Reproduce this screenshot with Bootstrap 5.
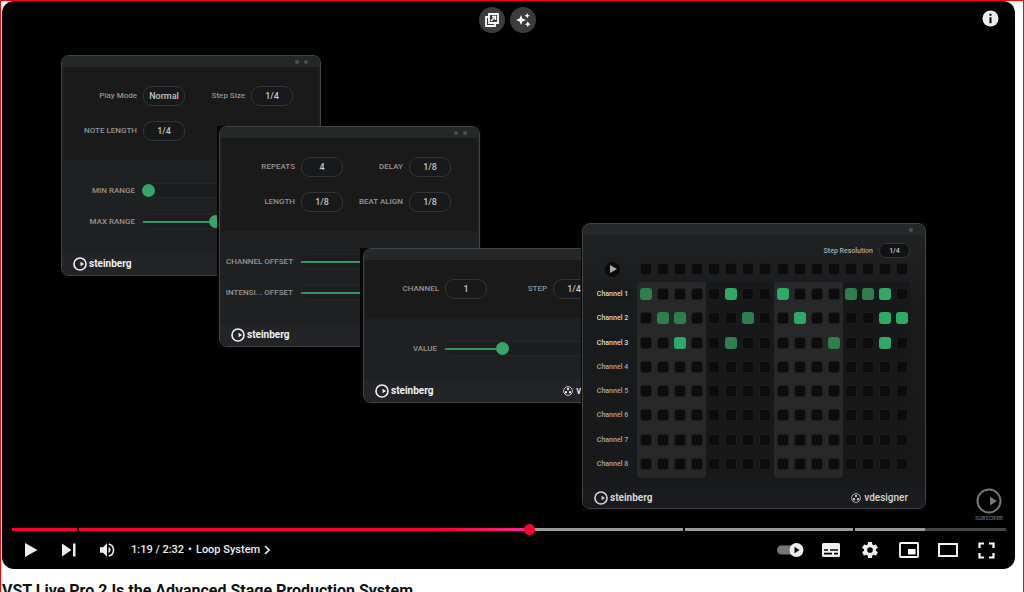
<!DOCTYPE html>
<html lang="en">
<head>
<meta charset="utf-8">
<meta name="viewport" content="width=device-width, initial-scale=1">
<title>VST Live Pro 2</title>
<link href="https://cdn.jsdelivr.net/npm/bootstrap@5.3.0/dist/css/bootstrap.min.css" rel="stylesheet">
<style>
body{font-family:Roboto,"Liberation Sans",sans-serif;background:#fff}
button{background:none;border:0;padding:0;color:inherit}
.frame{height:100vh;border:1px solid #f00;border-bottom:0;padding:0 8px 0 1px}
.player{aspect-ratio:1013/568;background:#000;border-radius:12px;color:#eee}
.round{width:26px;height:26px;border-radius:50%;background:#3c3c3c}
.top-bar{padding:6px 2px 0 0;gap:5px}
.info-btn{right:16px;top:9px}
.watermark{right:12px;bottom:48px;color:#777;font:500 5px/6px Inter,sans-serif;gap:1px}

/* plug-in windows */
.shot{position:absolute;background:#060606;font-size:8px;font-weight:500;line-height:12px;color:#949494}
.shot-1{left:59px;top:54px;width:260px}
.shot-2{left:215px;top:125px;width:264px;padding:0 1px 1px 2px}
.shot-3{left:358px;top:247px;width:278px;padding:0 0 1px 3px}
.shot-4{left:579px;top:222px;width:346px;padding:0 1px 2px 1px}
.panel{border:1px solid #414344;border-radius:8px;overflow:hidden;background:#1f2022}
.bar{height:11px;background:#242828;padding-right:12px;gap:5px}
.bar i{width:4px;height:4px;border-radius:50%;background:#4c5050}
.fields{background:#1a1a1a;padding:19px 0;margin:0 2px;display:grid;grid-template-columns:73px 42px 54px 42px;gap:15px 6px;align-items:center}
.fields label{text-align:right;white-space:nowrap}
.pill{width:42px;height:20px;border:1px solid #333435;border-radius:9px;background:#18191a;color:#c4c4c4;text-align:center;font-size:9px;font-weight:500;line-height:16px;padding:0;appearance:none}
.sliders{background:#1f2022;padding:23px 0;gap:16px}
.slide{height:15px;gap:7px}
.slide label{width:73px;text-align:right;white-space:nowrap}
.slide input{appearance:none;width:150px;height:15px;margin:0;border-radius:7px;box-shadow:inset 0 0 0 1px #242627;background:linear-gradient(#329563,#329563) 0 50%/var(--v) 2px no-repeat,#1b1d1e}
.slide input::-webkit-slider-thumb{appearance:none;width:13px;height:13px;margin:0;border-radius:50%;background:#38a46c}
.foot{height:23px;background:#222428;padding:0 17px 0 11px;color:#f2f2f2}
.brand{font-size:10px;font-weight:700;gap:2px}
.brand-v{font-size:10px;font-weight:500;gap:3px}

.seq{background:linear-gradient(#202223,#1a1b1d 30%,#17181a)}
.seq .foot{height:21px;background:#1a1b1e;color:#d5d5d5;margin-top:9px}
.seq-head{padding:8px 15px 0 0;gap:6px;font-size:7px;color:#aaa}
.seq-head .pill{width:31px;height:15px;font-size:7px;line-height:11px;border-radius:7px;background:#111213}
.seq-grid{display:grid;grid-template-columns:43px 1fr;column-gap:3px;padding:0 14px 0 8px}
.clock{height:22px;display:grid;grid-template-columns:repeat(16,1fr);place-items:center}
.play-dot{width:15px;height:15px;border-radius:50%;background:#0b0b0b;color:#aaa}
.names{display:grid;grid-template-rows:repeat(8,1fr);height:196px;margin-top:2px;padding-bottom:2px;align-items:center;text-align:center;font-size:7px;color:#a8a8a8}
.names span{background:#191a1b;border-radius:4px;margin:0 2px}
.names span:nth-child(-n+3){color:#d8d8d8}
.beats{display:grid;grid-template-columns:repeat(4,1fr);height:196px;margin-top:2px}
.beat{display:grid;grid-template-columns:repeat(4,1fr);grid-template-rows:repeat(8,1fr);place-items:center;padding-bottom:2px;border-radius:4px;background:#17181a}
.beat:nth-child(odd){background:#26282a}
.step{appearance:none;width:12px;height:12px;margin:0;border-radius:3px;background:#0c0c0d;border:1px solid #1b1c1d}
.step:checked{border:0;background:#30a868}
.step.soft:checked{background:#317d50}

/* transport */
.timeline{padding:0 9px 0 10px}
.chapters{gap:2px;height:3px}
.chapter{background:#444;flex-basis:0}
.chapter div{height:3px}
.chapter.buffered,.buffered{background:#999}
.played{background:#f03}
.played.fade-end{background:linear-gradient(90deg,#f03 80%,#ff2791)}
.knob{width:11px;height:11px;border-radius:50%;background:#f03;top:-4px;margin-left:-5px}
.controls{height:38px;padding:0 9px 0 10px;font-size:11px;font-weight:500}
.controls button{height:38px;font-weight:500}
.b-left{width:38px}.b-right{width:39px}
.when{margin-left:5px}
.chap{gap:4px}
.headline{font-size:16px;line-height:20px;font-weight:700;color:#0f0f0f;margin:12px 0 0;white-space:nowrap}
</style>
</head>
<body>
<svg width="0" height="0" class="position-absolute" aria-hidden="true">
  <symbol id="ring" viewBox="0 0 26 26"><circle cx="13" cy="13" r="11.200" fill="none" stroke="currentColor" stroke-width="3"/><path d="M14 8.800l6.500 4.200-6.500 4.200z" fill="currentColor"/></symbol>
  <symbol id="vd" viewBox="0 0 20 20"><circle cx="10" cy="10" r="8.800" fill="none" stroke="currentColor" stroke-width="1.600"/><circle cx="10" cy="6" r="2.300" fill="currentColor"/><circle cx="6" cy="12.500" r="2.300" fill="currentColor"/><circle cx="14" cy="12.500" r="2.300" fill="currentColor"/></symbol>
</svg>
<div class="frame overflow-hidden">
  <main class="player position-relative overflow-hidden d-flex flex-column">
    <div class="top-bar d-flex justify-content-center">
      <button class="round d-flex align-items-center justify-content-center" aria-label="Pop out"><svg width="16" height="16" viewBox="0 0 16 16" fill="none" stroke="#fff" stroke-width="1.800"><path d="M5 2h9v9H5z"/><path d="M4.500 5H2v9h9v-2.500"/><path d="M7 9l4.500-4.500M8 4.500h3.500V8" stroke-width="1.400"/></svg></button>
      <button class="round d-flex align-items-center justify-content-center" aria-label="Highlights"><svg width="16" height="16" viewBox="0 0 16 16" fill="#fff"><path d="M6 3l1.400 3.600L11 8l-3.600 1.400L6 13 4.600 9.400 1 8l3.600-1.400zM12.200 1l.8 2 2 .8-2 .8-.8 2-.8-2-2-.8 2-.8zM12.800 9.200l.9 2.100 2.100.9-2.100.9-.9 2.100-.9-2.100-2.100-.9 2.100-.9z"/></svg></button>
    </div>
    <button class="info-btn position-absolute d-flex" aria-label="Info"><svg width="17" height="17" viewBox="0 0 17 17"><circle cx="8.500" cy="8.500" r="8" fill="#eee"/><path d="M7.500 7.200h2v6h-2zM7.500 3.800h2v2h-2z" fill="#000"/></svg></button>

    <section class="shot shot-1"><div class="panel">
      <div class="bar d-flex align-items-center justify-content-end"><i></i><i></i></div>
      <div class="fields">
        <label for="mode">Play Mode</label><input class="pill" id="mode" value="Normal">
        <label for="size">Step Size</label><input class="pill" id="size" value="1/4">
        <label for="note">NOTE LENGTH</label><input class="pill" id="note" value="1/4">
      </div>
      <div class="sliders d-flex flex-column">
        <div class="slide d-flex align-items-center"><label for="min">MIN RANGE</label><input type="range" id="min" value="0" style="--v:0%"></div>
        <div class="slide d-flex align-items-center"><label for="max">MAX RANGE</label><input type="range" id="max" value="49" style="--v:49%"></div>
      </div>
      <div class="foot d-flex align-items-center"><div class="brand d-flex align-items-center"><svg width="14" height="14"><use href="#ring"/></svg>steinberg</div></div>
    </div></section>

    <section class="shot shot-2"><div class="panel">
      <div class="bar d-flex align-items-center justify-content-end"><i></i><i></i></div>
      <div class="fields">
        <label for="rep">REPEATS</label><input class="pill" id="rep" value="4">
        <label for="delay">DELAY</label><input class="pill" id="delay" value="1/8">
        <label for="len">LENGTH</label><input class="pill" id="len" value="1/8">
        <label for="beat">BEAT ALIGN</label><input class="pill" id="beat" value="1/8">
      </div>
      <div class="sliders d-flex flex-column">
        <div class="slide d-flex align-items-center"><label for="cho">CHANNEL OFFSET</label><input type="range" id="cho" value="60" style="--v:60%"></div>
        <div class="slide d-flex align-items-center"><label for="ino">INTENSI... OFFSET</label><input type="range" id="ino" value="60" style="--v:60%"></div>
      </div>
      <div class="foot d-flex align-items-center"><div class="brand d-flex align-items-center"><svg width="14" height="14"><use href="#ring"/></svg>steinberg</div></div>
    </div></section>

    <section class="shot shot-3"><div class="panel">
      <div class="bar"></div>
      <div class="fields">
        <label for="chn">CHANNEL</label><input class="pill" id="chn" value="1">
        <label for="stp">STEP</label><input class="pill" id="stp" value="1/4">
      </div>
      <div class="sliders d-flex flex-column">
        <div class="slide d-flex align-items-center"><label for="val">VALUE</label><input type="range" id="val" value="38" style="--v:38%"></div>
      </div>
      <div class="foot d-flex align-items-center justify-content-between"><div class="brand d-flex align-items-center"><svg width="14" height="14"><use href="#ring"/></svg>steinberg</div><div class="brand-v d-flex align-items-center"><svg width="10" height="10"><use href="#vd"/></svg>vdesigner</div></div>
    </div></section>

    <section class="shot shot-4"><div class="panel seq">
      <div class="bar d-flex align-items-center justify-content-end"><i></i></div>
      <div class="seq-head d-flex align-items-center justify-content-end"><label for="res">Step Resolution</label><input class="pill" id="res" value="1/4"></div>
      <div class="seq-grid">
        <div class="d-flex align-items-center justify-content-center"><button class="play-dot d-flex align-items-center justify-content-center" aria-label="Play pattern"><svg width="8" height="8" viewBox="0 0 8 8"><path d="M1 0l7 4-7 4z" fill="currentColor"/></svg></button></div>
        <div class="clock" id="clock"></div>
        <div class="names" id="names"></div>
        <div class="beats" id="beats"></div>
      </div>
      <div class="foot d-flex align-items-center justify-content-between"><div class="brand d-flex align-items-center"><svg width="14" height="14"><use href="#ring"/></svg>steinberg</div><div class="brand-v d-flex align-items-center"><svg width="10" height="10"><use href="#vd"/></svg>vdesigner</div></div>
    </div></section>

    <div class="watermark position-absolute d-flex flex-column align-items-center"><svg width="26" height="26" viewBox="0 0 26 26"><circle cx="13" cy="13" r="11.500" fill="none" stroke="currentColor" stroke-width="2"/><path d="M14 8.500l7 4.500-7 4.500z" fill="currentColor"/></svg>SUBSCRIBE</div>

    <div class="mt-auto">
      <div class="timeline"><div class="position-relative">
        <div class="chapters d-flex">
          <div class="chapter" style="flex-grow:65"><div class="played"></div></div>
          <div class="chapter buffered" style="flex-grow:604"><div class="played fade-end" style="width:74.5%"></div></div>
          <div class="chapter buffered" style="flex-grow:168"></div>
          <div class="chapter" style="flex-grow:151"><div class="buffered" style="width:46.5%"></div></div>
        </div>
        <div class="knob position-absolute" style="left:52%"></div>
      </div></div>
      <div class="controls d-flex align-items-center">
        <button class="b-left" aria-label="Play"><svg width="14" height="16" viewBox="0 0 14 16"><path d="M1 1l12.500 7L1 15z" fill="#eee"/></svg></button>
        <button class="b-left" aria-label="Next"><svg width="14" height="14" viewBox="0 0 14 14"><path d="M0 .5L9.500 7 0 13.500zM11 .5h2.500v13H11z" fill="#eee"/></svg></button>
        <button class="b-left" aria-label="Mute"><svg width="16" height="16" viewBox="0 0 16 16"><path d="M1 5.200h3L8 1.200v13.600l-4-4H1z" fill="#eee"/><path d="M9.500 5v6a3.200 3.200 0 0 0 0-6z" fill="#eee"/><path d="M9.800 1.900a6.300 6.300 0 0 1 0 12.200" fill="none" stroke="#eee" stroke-width="1.600"/></svg></button>
        <span class="when">1:19 / 2:32</span><span class="mx-1">•</span>
        <button class="chap d-flex align-items-center">Loop System <svg width="6" height="10" viewBox="0 0 6 10"><path d="M1 1l4 4-4 4" fill="none" stroke="#eee" stroke-width="1.600"/></svg></button>
        <div class="ms-auto d-flex">
          <button class="b-right" aria-label="Autoplay"><svg width="32" height="16" viewBox="0 0 32 16"><rect x="1" y="3.500" width="22" height="9" rx="4.500" fill="#777"/><circle cx="20.500" cy="8" r="7" fill="#eee"/><path d="M18.500 4.800l5 3.200-5 3.200z" fill="#000"/></svg></button>
          <button class="b-right" aria-label="Subtitles"><svg width="18" height="14" viewBox="0 0 18 14"><rect width="18" height="14" rx="1.500" fill="#eee"/><path d="M2 6.200h4v1.600H2zM8 6.200h8v1.600H8zM2 9.800h8v1.600H2zM12 9.800h4v1.600h-4z" fill="#000"/></svg></button>
          <button class="b-right" aria-label="Settings"><svg width="20" height="20" viewBox="0 0 24 24"><path fill="#eee" d="M19.140 12.940c.04-.3.060-.61.060-.94s-.02-.64-.07-.94l2.030-1.580a.49.490 0 0 0 .12-.61l-1.920-3.320a.49.490 0 0 0-.59-.22l-2.390.96a7 7 0 0 0-1.620-.94l-.36-2.540A.48.480 0 0 0 13.920 2.400h-3.840a.48.480 0 0 0-.48.410l-.36 2.540a7.200 7.200 0 0 0-1.620.94l-2.390-.96a.48.480 0 0 0-.59.220L2.720 8.870a.48.480 0 0 0 .12.610l2.030 1.580a6 6 0 0 0 0 1.880l-2.030 1.580a.49.490 0 0 0-.12.610l1.920 3.320c.12.220.37.290.59.220l2.390-.96c.5.380 1.030.7 1.620.94l.36 2.540c.05.240.24.410.48.410h3.840c.24 0 .44-.17.470-.41l.36-2.540a7 7 0 0 0 1.620-.94l2.390.96c.22.080.47 0 .59-.22l1.920-3.320a.48.480 0 0 0-.12-.61zM12 15.400a3.400 3.400 0 1 1 0-6.800 3.400 3.400 0 0 1 0 6.800z"/></svg></button>
          <button class="b-right" aria-label="Miniplayer"><svg width="20" height="16" viewBox="0 0 20 16"><rect x="1" y="1" width="18" height="14" rx=".5" fill="none" stroke="#fff" stroke-width="1.800"/><path d="M9 7h7.500v5.500H9z" fill="#fff"/></svg></button>
          <button class="b-right" aria-label="Theater mode"><svg width="20" height="14" viewBox="0 0 20 14"><rect x="1" y="1" width="18" height="12" fill="none" stroke="#fff" stroke-width="1.900"/></svg></button>
          <button class="b-right" aria-label="Full screen"><svg width="17" height="17" viewBox="0 0 17 17"><path d="M1.500 6V1.500H6M11 1.500h4.500V6M15.500 11v4.500H11M6 15.500H1.500V11" fill="none" stroke="#fff" stroke-width="2.200"/></svg></button>
        </div>
      </div>
    </div>
  </main>
  <h1 class="headline">VST Live Pro 2 Is the Advanced Stage Production System</h1>
</div>
<script src="https://cdn.jsdelivr.net/npm/bootstrap@5.3.0/dist/js/bootstrap.bundle.min.js"></script>
<script>
// Pattern rows: "#" is a full-velocity step, "+" a softer one.
const rows=["+....#..#...++#.",".++...+..#....##","..#..+.....+..#.",".","."];
const box=(ch,label)=>`<input type="checkbox" class="step${ch==="+"?" soft":""}" aria-label="${label}"${ch==="#"||ch==="+"?" checked":""}>`;
document.getElementById("clock").innerHTML=Array.from({length:16},(_,i)=>box(".","Position "+(i+1))).join("");
let names="",beats="";
for(let r=0;r<8;r++)names+=`<span>Channel ${r+1}</span>`;
for(let b=0;b<4;b++){
  beats+='<div class="beat">';
  for(let r=0;r<8;r++)for(let c=b*4;c<b*4+4;c++)beats+=box((rows[r]||"")[c],`Channel ${r+1} step ${c+1}`);
  beats+="</div>";
}
document.getElementById("names").innerHTML=names;
document.getElementById("beats").innerHTML=beats;
</script>
</body>
</html>
